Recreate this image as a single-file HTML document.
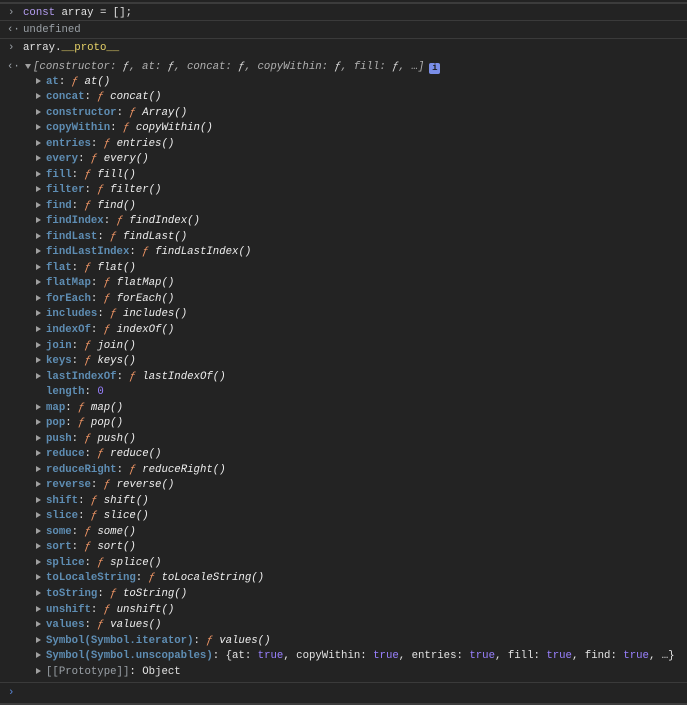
<html><head><style>
body{margin:0;background:#232323;width:687px;height:705px;overflow:hidden;font-family:"Liberation Mono",monospace;font-size:10.7px;color:#e3e3e3;position:relative}
.l{position:absolute;left:0;white-space:pre;line-height:15px}
.sep{position:absolute;left:0;width:687px;height:1px;background:#3a3a3a}
.k{color:#5e8db3;font-weight:bold}
.f{color:#f29766;font-style:italic}
.n{font-style:italic;color:#eee}
.p{color:#9980ff}
.g{color:#9aa0a6}
.tri{display:inline-block;width:0;height:0;border-left:5px solid #a0a0a0;border-top:3.5px solid transparent;border-bottom:3.5px solid transparent;margin-right:5px;vertical-align:0px}
</style></head><body>
<div class="sep" style="top:2px;height:2px;background:#3c3c3c"></div>
<div class="l" style="top:6px;left:8px"><span class="g">›</span></div>
<div class="l" style="top:6px;left:23px"><span style="color:#b39cf0">const</span> array = [];</div>
<div class="sep" style="top:20px"></div>
<div class="l" style="top:23px;left:7px"><span class="g">‹·</span></div>
<div class="l" style="top:23px;left:23px;color:#9aa0a6">undefined</div>
<div class="sep" style="top:38px"></div>
<div class="l" style="top:41px;left:8px"><span class="g">›</span></div>
<div class="l" style="top:41px;left:23px">array.<span style="color:#e5d167">__proto__</span></div>
<div class="l" style="top:60px;left:7px"><span class="g">‹·</span></div>
<div class="l" style="top:60px;left:25px;color:#b0b0b0;font-style:italic"><span style="display:inline-block;width:0;height:0;border-top:5px solid #a0a0a0;border-left:3.5px solid transparent;border-right:3.5px solid transparent;margin-right:2px"></span>[constructor: <span style="color:#ddd">ƒ</span>, at: <span style="color:#ddd">ƒ</span>, concat: <span style="color:#ddd">ƒ</span>, copyWithin: <span style="color:#ddd">ƒ</span>, fill: <span style="color:#ddd">ƒ</span>, …]<span style="display:inline-block;width:11px;height:11px;background:#7a8ee8;border-radius:2px;color:#1e1e1e;font-style:normal;font-weight:bold;text-align:center;line-height:11px;font-size:9px;margin-left:5px;vertical-align:-1px">i</span></div>
<div id="rows"></div>
<div class="sep" style="top:682px"></div>
<div class="l" style="top:686px;left:8px;color:#5a88d8">›</div>
<div class="sep" style="top:703px;height:2px;background:#3c3c3c"></div>
<script>
var r=[["at","at"],["concat","concat"],["constructor","Array"],["copyWithin","copyWithin"],["entries","entries"],["every","every"],["fill","fill"],["filter","filter"],["find","find"],["findIndex","findIndex"],["findLast","findLast"],["findLastIndex","findLastIndex"],["flat","flat"],["flatMap","flatMap"],["forEach","forEach"],["includes","includes"],["indexOf","indexOf"],["join","join"],["keys","keys"],["lastIndexOf","lastIndexOf"],["length",null],["map","map"],["pop","pop"],["push","push"],["reduce","reduce"],["reduceRight","reduceRight"],["reverse","reverse"],["shift","shift"],["slice","slice"],["some","some"],["sort","sort"],["splice","splice"],["toLocaleString","toLocaleString"],["toString","toString"],["unshift","unshift"],["values","values"],["Symbol(Symbol.iterator)","values"],["Symbol(Symbol.unscopables)","U"],["[[Prototype]]","P"]];
var h="";
r.forEach(function(e,i){var t=74.5+i*15.53;var s;
if(e[1]===null)s='<span style="display:inline-block;width:10px"></span><span class="k">length</span>: <span class="p">0</span>';
else if(e[1]=="U")s='<span class="tri"></span><span class="k">'+e[0]+'</span>: {at: <span class="p">true</span>, copyWithin: <span class="p">true</span>, entries: <span class="p">true</span>, fill: <span class="p">true</span>, find: <span class="p">true</span>, …}';
else if(e[1]=="P")s='<span class="tri"></span><span class="g">[[Prototype]]</span>: Object';
else s='<span class="tri"></span><span class="k">'+e[0]+'</span>: <span class="f">ƒ</span> <span class="n">'+e[1]+'()</span>';
h+='<div class="l" style="top:'+t+'px;left:36px">'+s+'</div>';});
document.getElementById("rows").innerHTML=h;
</script>
</body></html>
